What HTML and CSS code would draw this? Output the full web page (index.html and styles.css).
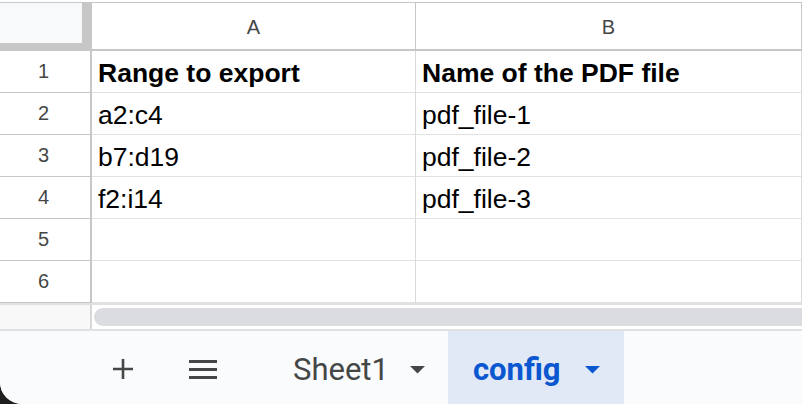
FILE: index.html
```html
<!DOCTYPE html>
<html lang="en">
<head>
    <meta charset="UTF-8">
    <title>config - Sheets</title>
    <link rel="stylesheet" href="styles.css">
</head>
<body>
    <div class="app">
        <div class="grid">
            <div class="corner"></div>
            <div class="col-head">A</div>
            <div class="col-head">B</div>

            <div class="row-head">1</div>
            <div class="cell bold">Range to export</div>
            <div class="cell bold">Name of the PDF file</div>

            <div class="row-head">2</div>
            <div class="cell">a2:c4</div>
            <div class="cell">pdf_file-1</div>

            <div class="row-head">3</div>
            <div class="cell">b7:d19</div>
            <div class="cell">pdf_file-2</div>

            <div class="row-head">4</div>
            <div class="cell">f2:i14</div>
            <div class="cell">pdf_file-3</div>

            <div class="row-head">5</div>
            <div class="cell"></div>
            <div class="cell"></div>

            <div class="row-head">6</div>
            <div class="cell"></div>
            <div class="cell"></div>
        </div>

        <!-- horizontal scrollbar -->
        <div class="scroll-row">
            <div class="scroll-gutter"></div>
            <div class="scroll-track">
                <div class="scroll-thumb"></div>
            </div>
        </div>

        <!-- sheet tabs -->
        <div class="tabs">
            <button class="icon-btn add-btn" title="Add sheet">
                <svg width="20" height="20" viewBox="0 0 20 20">
                    <path d="M10 0v20M0 10h20" stroke="#444746" stroke-width="2.6" fill="none"/>
                </svg>
            </button>
            <button class="icon-btn list-btn" title="All sheets">
                <svg width="28" height="19" viewBox="0 0 28 19">
                    <path d="M0 1.5h28M0 9.5h28M0 17.5h28" stroke="#444746" stroke-width="3" fill="none"/>
                </svg>
            </button>
            <div class="tab">
                <span class="tab-name">Sheet1</span>
                <svg class="caret" width="15" height="8" viewBox="0 0 15 8">
                    <polygon points="0,0 15,0 7.5,7.5" fill="#444746"/>
                </svg>
            </div>
            <div class="tab active">
                <span class="tab-name">config</span>
                <svg class="caret" width="15" height="8" viewBox="0 0 15 8">
                    <polygon points="0,0 15,0 7.5,7.5" fill="#0b57d0"/>
                </svg>
            </div>
        </div>
    </div>
</body>
</html>
```

FILE: styles.css
```css
* {
    margin: 0;
    padding: 0;
    box-sizing: border-box;
}

html,
body {
    height: 100%;
    background: #1e1e1e;
    overflow: hidden;
}

body {
    font-family: 'Liberation Sans', Arial, sans-serif;
}

.app {
    width: 802px;
    height: 404px;
    background: #ffffff;
    border-bottom-left-radius: 22px;
    overflow: hidden;
    display: flex;
    flex-direction: column;
    padding-top: 2px;
}

.grid {
    display: grid;
    grid-template-columns: 92px 324px 1fr;
    grid-template-rows: 48px repeat(6, 42px);
    border-top: 1px solid #c7c7c7;
}

.corner {
    background: #f8f9fa;
    border-right: 10px solid #c7c7c7;
    border-bottom: 8px solid #c7c7c7;
}

.col-head {
    display: flex;
    align-items: center;
    justify-content: center;
    font-size: 20px;
    color: #444746;
    border-right: 1px solid #c7c7c7;
    border-bottom: 2px solid #c7c7c7;
    padding-top: 2px;
}

.row-head {
    display: flex;
    align-items: center;
    justify-content: center;
    font-size: 20px;
    color: #444746;
    border-right: 2px solid #c7c7c7;
    border-bottom: 1px solid #c7c7c7;
    padding-right: 3px;
}

.cell {
    display: flex;
    align-items: flex-end;
    padding: 0 6px 4px;
    font-size: 26.5px;
    line-height: 30px;
    color: #000;
    border-right: 1px solid #dadada;
    border-bottom: 1px solid #e1e1e1;
    white-space: nowrap;
    overflow: hidden;
}

.cell.bold {
    font-weight: 700;
}

.scroll-row {
    display: flex;
    height: 28px;
    border-top: 2px solid #e1e1e1;
    border-bottom: 2px solid #e1e1e1;
}

.scroll-gutter {
    width: 92px;
    background: #f8f8f8;
    border-right: 2px solid #d7d7d7;
}

.scroll-track {
    flex: 1;
    padding: 3px 0 0 2px;
}

.scroll-thumb {
    height: 18px;
    background: #dadce0;
    border-radius: 9px 0 0 9px;
}

.tabs {
    flex: 1;
    display: flex;
    align-items: stretch;
    background: #f9fbfd;
    padding-left: 113px;
    font-family: Roboto, 'Liberation Sans', sans-serif;
}

.icon-btn {
    background: none;
    border: none;
    display: flex;
    align-items: center;
    padding-top: 3px;
}

.list-btn {
    margin-left: 56px;
}

.tab {
    display: flex;
    align-items: center;
    padding: 3px 23px 0 25px;
    font-size: 31px;
    color: #444746;
}

.list-btn + .tab {
    margin-left: 51px;
}

.tab .caret {
    margin-left: 21px;
    margin-top: 1px;
}

.tab.active {
    background: #e1e9f7;
    color: #0b57d0;
    font-weight: 700;
    padding-right: 24px;
}

.tab.active .caret {
    margin-left: 24px;
}
```
